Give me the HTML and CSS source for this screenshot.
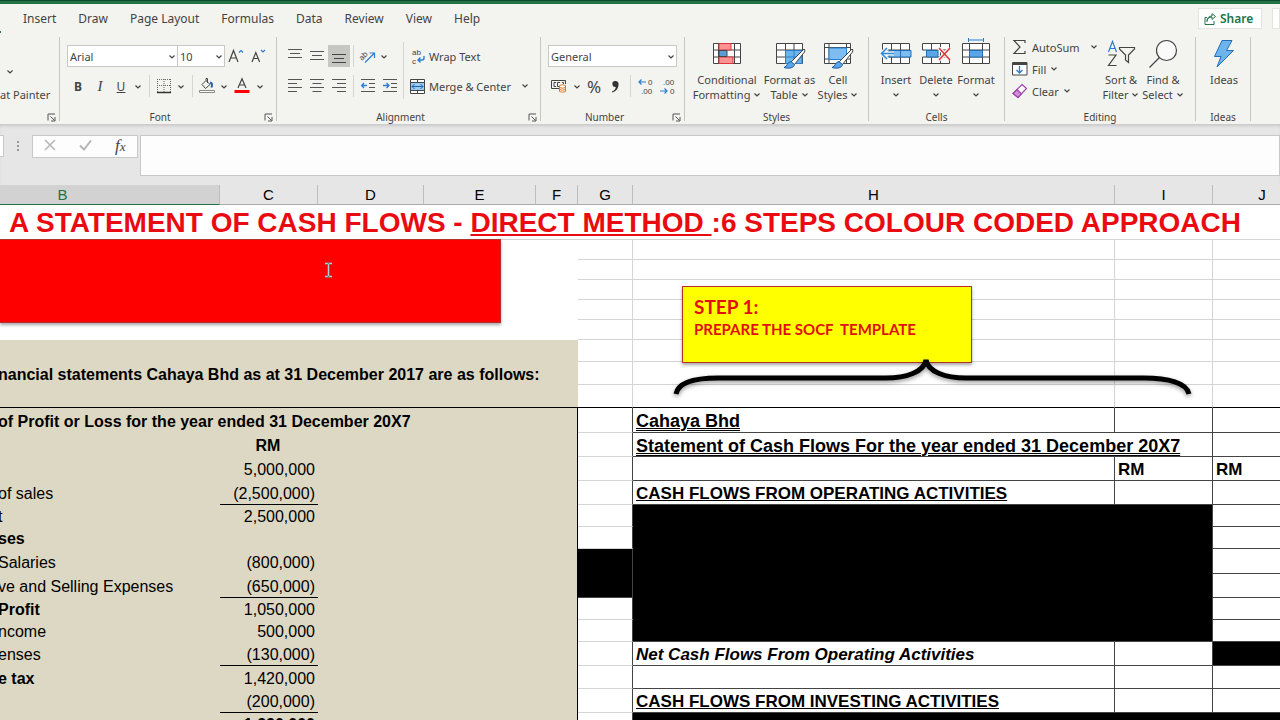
FILE: index.html
```html
<!DOCTYPE html>
<html lang="en">

<head>
    <meta charset="UTF-8">
    <meta name="viewport" content="width=device-width, initial-scale=1.0">
    <title>Statement of Cash Flows</title>
    <link rel="stylesheet" href="styles.css">
</head>

<body>
    <!-- shared icons -->
    <svg class="defs" aria-hidden="true">
        <symbol id="chev" viewBox="0 0 8 8"><path d="M1.5 2.5 4 5 6.5 2.5" fill="none" stroke="#444" stroke-width="1.2" /></symbol>
        <symbol id="launch" viewBox="0 0 9 9"><path d="M1 7.500V1H8M3.500 3.500 7.500 7.500M8 4V8H4" fill="none" stroke="#555" /></symbol>
    </svg>

    <div class="title-strip"></div>

    <!-- tabs -->
    <nav class="tabs">
        <span class="tab-active"></span>
        <a href="#">Insert</a>
        <a href="#">Draw</a>
        <a href="#">Page Layout</a>
        <a href="#">Formulas</a>
        <a href="#">Data</a>
        <a href="#">Review</a>
        <a href="#">View</a>
        <a href="#">Help</a>
        <button class="share">
            <svg width="12" height="12" viewBox="0 0 12 12" fill="none" stroke="#217346"><path d="M3 4.500H1V11.500H10V8M3 8.500C3 5.500 5 4 8 4V6.500L11.500 3.500 8 .7V3C5 3 3 5 3 8.500" /></svg>
            Share
        </button>
        <button class="comments" aria-label="Comments">
            <svg width="12" height="12" viewBox="0 0 12 12" fill="none" stroke="#217346"><path d="M1 1.500H11V8.500H6L3.500 11V8.500H1Z" /></svg>
        </button>
    </nav>

    <!-- ribbon -->
    <div class="ribbon">
        <div class="group clipboard">
            <div class="tools stack">
                <button class="arrow" aria-label="Copy"><svg><use href="#chev" /></svg></button>
                <button class="text-btn">at Painter</button>
            </div>
            <div class="group-name"><span></span><button class="launch" aria-label="Clipboard settings"><svg><use href="#launch" /></svg></button></div>
        </div>

        <div class="group font">
            <div class="tools stack">
                <div class="row">
                    <div class="pick pick-font"><select aria-label="Font"><option>Arial</option></select><svg><use href="#chev" /></svg></div>
                    <div class="pick pick-size"><select aria-label="Font size"><option>10</option></select><svg><use href="#chev" /></svg></div>
                    <button class="tool" aria-label="Increase font size"><svg width="16" height="16" viewBox="0 0 16 16" fill="none" stroke="#444" stroke-width="1.200"><path d="M1 14 5.500 2.500 10 14M2.700 10H8.300" /><path d="M11 4.500 13 2.500 15 4.500" stroke="#2b7cd3" /></svg></button>
                    <button class="tool" aria-label="Decrease font size"><svg width="16" height="16" viewBox="0 0 16 16" fill="none" stroke="#444" stroke-width="1.200"><path d="M2 14 5.800 4.500 9.600 14M3.500 10.500H8" /><path d="M11 2 13 4 15 2" stroke="#2b7cd3" /></svg></button>
                </div>
                <div class="row">
                    <button class="tool bold">B</button>
                    <button class="tool italic">I</button>
                    <button class="tool narrow under">U</button>
                    <button class="arrow" aria-label="Underline options"><svg><use href="#chev" /></svg></button>
                    <span class="sep"></span>
                    <button class="tool narrow" aria-label="Borders"><svg width="16" height="16" viewBox="0 0 16 16" fill="none" stroke="#666"><path d="M1 1.500H15M1 7.500H15M1.500 1V14M8 1V14M14.500 1V14" stroke-dasharray="1 1" /><path d="M1 14.500H15" stroke="#333" stroke-width="1.500" /></svg></button>
                    <button class="arrow" aria-label="Border options"><svg><use href="#chev" /></svg></button>
                    <span class="sep"></span>
                    <button class="tool narrow" aria-label="Fill colour"><svg width="16" height="16" viewBox="0 0 16 16" fill="none" stroke="#444"><path d="M3 6.500 7 2.500 11 6.500 6.500 10.500ZM7 2.500V.5H8.500V5" /><path d="M11 4.500C13 5 13.500 6 12.500 9.500" stroke="#1f5fa8" stroke-width="2" /><path d="M.5 12.500H15.500V14.500H.5Z" fill="#fff" stroke="#888" /></svg></button>
                    <button class="arrow" aria-label="Fill options"><svg><use href="#chev" /></svg></button>
                    <button class="tool" aria-label="Font colour"><svg width="16" height="16" viewBox="0 0 16 16" fill="none" stroke="#444" stroke-width="1.200"><path d="M4 10 8 .8 12 10M5.500 7H10.500" /><path d="M.5 13.500H15.500" stroke="#f00" stroke-width="3" /></svg></button>
                    <button class="arrow" aria-label="Font colour options"><svg><use href="#chev" /></svg></button>
                </div>
            </div>
            <div class="group-name"><span>Font</span><button class="launch" aria-label="Font settings"><svg><use href="#launch" /></svg></button></div>
        </div>

        <div class="group alignment">
            <div class="tools">
                <div class="stack">
                    <div class="row">
                        <button class="tool" aria-label="Top align"><svg width="14" height="16" viewBox="0 0 14 16" stroke="#555"><path d="M0 1.500H14M2 5.500H12M0 9.500H14" /></svg></button>
                        <button class="tool" aria-label="Middle align"><svg width="14" height="16" viewBox="0 0 14 16" stroke="#555"><path d="M0 3.500H14M2 7.500H12M0 11.500H14" /></svg></button>
                        <button class="tool pressed" aria-label="Bottom align"><svg width="14" height="16" viewBox="0 0 14 16" stroke="#444"><path d="M0 6.500H14M2 10.500H12M0 14.500H14" /></svg></button>
                        <span class="sep tight"></span>
                        <button class="tool narrow" aria-label="Orientation"><svg width="17" height="16" viewBox="0 0 17 16"><text class="icon-text" x="0" y="10" transform="rotate(-45 5 8)">ab</text><path d="M6 14.500 15 5.500M10.500 5H15.500V10" fill="none" stroke="#2b7cd3" stroke-width="1.200" /></svg></button>
                        <button class="arrow" aria-label="Orientation options"><svg><use href="#chev" /></svg></button>
                    </div>
                    <div class="row">
                        <button class="tool" aria-label="Align left"><svg width="14" height="14" viewBox="0 0 14 14" stroke="#555"><path d="M0 .5H14M0 4.500H9M0 8.500H14M0 12.500H9" /></svg></button>
                        <button class="tool" aria-label="Center"><svg width="14" height="14" viewBox="0 0 14 14" stroke="#555"><path d="M0 .5H14M2.500 4.500H11.500M0 8.500H14M2.500 12.500H11.500" /></svg></button>
                        <button class="tool" aria-label="Align right"><svg width="14" height="14" viewBox="0 0 14 14" stroke="#555"><path d="M0 .5H14M5 4.500H14M0 8.500H14M5 12.500H14" /></svg></button>
                        <span class="sep tight"></span>
                        <button class="tool" aria-label="Decrease indent"><svg width="14" height="14" viewBox="0 0 14 14" fill="none" stroke="#555"><path d="M0 .5H14M8 4.500H14M8 8.500H14M0 12.500H14" /><path d="M6 6.500H1M3 4 .7 6.500 3 9" stroke="#2b7cd3" stroke-width="1.300" /></svg></button>
                        <button class="tool" aria-label="Increase indent"><svg width="14" height="14" viewBox="0 0 14 14" fill="none" stroke="#555"><path d="M0 .5H14M8 4.500H14M8 8.500H14M0 12.500H14" /><path d="M0 6.500H5M3.500 4 6 6.500 3.500 9" stroke="#2b7cd3" stroke-width="1.300" /></svg></button>
                    </div>
                </div>
                <span class="sep tall"></span>
                <div class="stack">
                    <button class="text-btn"><svg width="15" height="18" viewBox="0 0 15 18"><text class="icon-text" x="2" y="8">ab</text><text class="icon-text" x="2" y="17">c</text><path d="M14 9V11Q14 13 12 13H8M10.500 10.500 8 13 10.500 15.500" fill="none" stroke="#2b7cd3" stroke-width="1.400" /></svg>Wrap Text</button>
                    <button class="text-btn"><svg width="15" height="15" viewBox="0 0 15 15" fill="none"><path d="M.5.5H14.500V14.500H.5ZM.5 3.500H14.500M.5 11.500H14.500M7.500.5V3.500M7.500 11.500V14.500" fill="#fff" stroke="#444" /><path d="M1 4H14V11H1Z" fill="#9dcbf0" /><path d="M2 7.500H13M4.500 5 2 7.500 4.500 10M10.500 5 13 7.500 10.500 10" stroke="#1565b5" /></svg>Merge &amp; Center<svg class="far"><use href="#chev" /></svg></button>
                </div>
            </div>
            <div class="group-name"><span>Alignment</span><button class="launch" aria-label="Alignment settings"><svg><use href="#launch" /></svg></button></div>
        </div>

        <div class="group number">
            <div class="tools stack">
                <div class="row">
                    <div class="pick pick-format"><select aria-label="Number format"><option>General</option></select><svg><use href="#chev" /></svg></div>
                </div>
                <div class="row">
                    <button class="tool" aria-label="Accounting format"><svg width="16" height="14" viewBox="0 0 16 14" fill="none" stroke="#444"><path d="M8 9.500H.5V1.500H14.500V5M5 3.500H3V7.500H5M9 3.500H6.500V7.500H8M12.500 5V3.500H11" /><path d="M8.500 6.500Q11.500 5 14.500 6.500V12.500Q11.500 14 8.500 12.500ZM8.500 8.500Q11.500 10 14.500 8.500M8.500 10.500Q11.500 12 14.500 10.500" fill="#fff" stroke="#e07b1c" /></svg></button>
                    <button class="arrow" aria-label="Accounting options"><svg><use href="#chev" /></svg></button>
                    <button class="tool narrow percent">%</button>
                    <button class="tool" aria-label="Comma style"><svg width="8" height="13" viewBox="0 0 8 13"><path d="M4 1A3 3 0 0 1 7.500 4.500C7.500 8.500 5 11.500 1 12.500V11.500C3.500 10.500 4.500 9 4.800 7A3 3 0 1 1 4 1Z" fill="#333" /></svg></button>
                    <span class="sep"></span>
                    <button class="tool" aria-label="Increase decimal"><svg width="16" height="18" viewBox="0 0 16 18"><text class="icon-text" x="10" y="8">0</text><text class="icon-text" x="3" y="17">.00</text><path d="M8 5H1M3.500 2.500 1 5 3.500 7.500" fill="none" stroke="#2b7cd3" stroke-width="1.200" /></svg></button>
                    <button class="tool" aria-label="Decrease decimal"><svg width="16" height="18" viewBox="0 0 16 18"><text class="icon-text" x="3" y="8">.00</text><text class="icon-text" x="10" y="17">0</text><path d="M0 14H7M4.500 11.500 7 14 4.500 16.500" fill="none" stroke="#2b7cd3" stroke-width="1.200" /></svg></button>
                </div>
            </div>
            <div class="group-name"><span>Number</span><button class="launch" aria-label="Number settings"><svg><use href="#launch" /></svg></button></div>
        </div>

        <div class="group styles">
            <div class="tools">
                <button class="big wide">
                    <svg width="28" height="28" viewBox="0 0 28 28" fill="none" stroke="#444"><path d="M.5 3.500H27.500V23.500H.5ZM.5 10H27.500M.5 17H27.500M5.500 3.500V23.500M21.500 3.500V23.500" fill="#fff" /><path d="M6 3.500H18V10H6ZM6 17H20V23.500H6Z" fill="#ff9290" stroke="#d9363e" /><path d="M6 10.500H14V16.500H6Z" fill="#5b9bd5" /></svg>
                    <span>Conditional</span><span>Formatting <svg><use href="#chev" /></svg></span>
                </button>
                <button class="big mid">
                    <svg width="28" height="28" viewBox="0 0 28 28" fill="none" stroke="#444"><path d="M.5 3.500H26.500V23.500H.5ZM.5 10H26.500M.5 17H26.500M9.500 3.500V23.500M18 3.500V23.500" fill="#fff" /><path d="M9.500 10.500H26V23.500H9.500ZM9.500 17H26M18 10.500V23.500" fill="#6db3ec" stroke="#2b7cd3" /><path d="M28 9 15 22 18 25 28.500 12Q29.500 9.500 28 9Z" fill="#fff" /><path d="M15 21.500C11 22 12 26 8 27.500C13 29 18 28 18.500 24.500Z" fill="#5aa6e6" stroke="#1f5fa8" /></svg>
                    <span>Format as</span><span>Table <svg><use href="#chev" /></svg></span>
                </button>
                <button class="big">
                    <svg width="28" height="28" viewBox="0 0 28 28" fill="none" stroke="#444"><path d="M.5 3.500H26.500V23.500H.5ZM.5 7.500H26.500M.5 19H26.500M5 3.500V23.500M22.500 3.500V23.500" fill="#fff" /><path d="M5 8H22.500V19.500H5Z" fill="#7fbdf0" stroke="#2b7cd3" /><path d="M28 9 15 22 18 25 28.500 12Q29.500 9.500 28 9Z" fill="#fff" /><path d="M15 21.500C11 22 12 26 8 27.500C13 29 18 28 18.500 24.500Z" fill="#5aa6e6" stroke="#1f5fa8" /></svg>
                    <span>Cell</span><span>Styles <svg><use href="#chev" /></svg></span>
                </button>
            </div>
            <div class="group-name"><span>Styles</span></div>
        </div>

        <div class="group cells">
            <div class="tools">
                <button class="big">
                    <svg width="32" height="28" viewBox="0 0 32 28" fill="none" stroke="#444"><path d="M2.500 3.500H29.500V23.500H2.500ZM11.500 3.500V23.500M20.500 3.500V23.500M2.500 10H29.500M2.500 17H29.500" fill="#fff" /><path d="M9 10.500H31V17H9ZM20.500 10.500V17" fill="#7fbdf0" stroke="#1f6fb8" /><path d="M14 13.500H1.500M7 8 1.500 13.500 7 19" stroke="#f3f3ef" stroke-width="4" /><path d="M14 13.500H1.500M7 8 1.500 13.500 7 19" stroke="#2b8be0" stroke-width="1.500" /></svg>
                    <span>Insert</span><span><svg><use href="#chev" /></svg></span>
                </button>
                <button class="big">
                    <svg width="32" height="28" viewBox="0 0 32 28" fill="none" stroke="#444"><path d="M2.500 10V3.500H29.500V9M2.500 17V23.500H29.500V18M11.500 3.500V23.500M20.500 3.500V23.500M2.500 10H29M2.500 17H29" fill="#fff" /><path d="M6.500 10.500H18V17H6.500Z" fill="#5aa6e6" stroke="#1f6fb8" /><path d="M19 8 30 20M30 8 19 20" stroke="#f3f3ef" stroke-width="4" /><path d="M19 8 30 20M30 8 19 20" stroke="#e0353b" stroke-width="1.500" /></svg>
                    <span>Delete</span><span><svg><use href="#chev" /></svg></span>
                </button>
                <button class="big">
                    <svg width="32" height="28" viewBox="0 0 32 28" fill="none" stroke="#444"><path d="M2.500 3.500H29.500V23.500H2.500ZM9.500 3.500V23.500M22.500 3.500V23.500M2.500 10H29.500M2.500 17H29.500" fill="#fff" /><path d="M9.500 10.500H22.500V17H9.500Z" fill="#5aa6e6" stroke="#1f6fb8" /><path d="M8.500 0H23.500M8.500-2V2M23.500-2V2" stroke="#2b7cd3" /></svg>
                    <span>Format</span><span><svg><use href="#chev" /></svg></span>
                </button>
            </div>
            <div class="group-name"><span>Cells</span></div>
        </div>

        <div class="group editing">
            <div class="tools">
                <div class="stack small">
                    <button class="text-btn"><svg width="16" height="16" viewBox="0 0 16 16" fill="none" stroke="#444" stroke-width="1.200"><path d="M13 4V1.500H2L8 8 2 14.500H13V12" /></svg>AutoSum<svg class="far"><use href="#chev" /></svg></button>
                    <button class="text-btn"><svg width="16" height="16" viewBox="0 0 16 16" fill="none" stroke="#444"><path d="M.5 1.500H15V14H.5Z" fill="#fff" /><path d="M.5 3H15" stroke-width="2" /><path d="M7.500 5V12M4.500 9 7.500 12 10.500 9" stroke="#2b7cd3" stroke-width="1.300" /></svg>Fill<svg><use href="#chev" /></svg></button>
                    <button class="text-btn"><svg width="16" height="16" viewBox="0 0 16 16" stroke="#9b3fa8" stroke-width="1.100"><path d="M10 1.500 14.500 5.500 6 14.500 1 10.500Z" fill="#fff" /><path d="M5 6.500 9.500 10.800 6 14.500 1 10.500Z" fill="#cf8ed8" /></svg>Clear<svg><use href="#chev" /></svg></button>
                </div>
                <button class="big">
                    <svg width="28" height="28" viewBox="0 0 28 28" fill="none" stroke="#444" stroke-width="1.200"><path d="M1.500 12 5.500 1.500 9.500 12M3 8.500H8" stroke="#2b7cd3" /><path d="M1.500 15H9L1.500 25.500H9.500M12.500 7.500H27.500V9L21.500 15V22.500L18.500 20V15L12.500 9Z" /></svg>
                    <span>Sort &amp;</span><span>Filter <svg><use href="#chev" /></svg></span>
                </button>
                <button class="big">
                    <svg width="28" height="28" viewBox="0 0 28 28" fill="none" stroke="#444" stroke-width="1.200"><circle cx="17.500" cy="10.500" r="10" fill="#fafafa" /><path d="M10.500 17.500.5 27.500" /></svg>
                    <span>Find &amp;</span><span>Select <svg><use href="#chev" /></svg></span>
                </button>
            </div>
            <div class="group-name"><span>Editing</span></div>
        </div>

        <div class="group ideas">
            <div class="tools">
                <button class="big">
                    <svg width="22" height="28" viewBox="0 0 22 28"><path d="M9 .5H19L13.500 10.500H20.500L4 27 8 16.500H1.500Z" fill="#6db3ec" stroke="#1f6fb8" /></svg>
                    <span>Ideas</span>
                </button>
            </div>
            <div class="group-name"><span>Ideas</span></div>
        </div>
    </div>

    <!-- formula bar -->
    <div class="formula-bar">
        <span class="name-box"></span>
        <svg class="grip" width="3" height="11" viewBox="0 0 3 11"><path d="M0 0H2V2H0ZM0 4H2V6H0ZM0 8H2V10H0Z" fill="#999" /></svg>
        <div class="fx-box">
            <button aria-label="Cancel"><svg width="12" height="12" viewBox="0 0 12 12" stroke="#b5b5b5" stroke-width="1.500"><path d="M1 1 11 11M11 1 1 11" /></svg></button>
            <button aria-label="Enter"><svg width="13" height="12" viewBox="0 0 13 12" fill="none" stroke="#b5b5b5" stroke-width="2"><path d="M1 6.500 5 10.500 12 1.500" /></svg></button>
            <button class="fx" aria-label="Insert function">f<small>x</small></button>
        </div>
        <textarea class="formula" aria-label="Formula"></textarea>
    </div>

    <!-- worksheet -->
    <div class="sheet">
        <table>
            <colgroup>
                <col class="col-b"><col class="col-c"><col class="col-d"><col class="col-e"><col class="col-f"><col class="col-g"><col class="col-h"><col class="col-i"><col class="col-j">
            </colgroup>
            <thead>
                <tr>
                    <th class="selected">B</th><th>C</th><th>D</th><th>E</th><th>F</th><th>G</th><th>H</th><th>I</th><th>J</th>
                </tr>
            </thead>
            <tbody class="plain">
                <tr class="r35"><td colspan="9" class="heading">A STATEMENT OF CASH FLOWS - <u>DIRECT METHOD </u>:6 STEPS COLOUR CODED APPROACH</td></tr>
                <tr class="r20"><td colspan="5" rowspan="5" class="blank"></td><td></td><td></td><td></td><td></td></tr>
                <tr class="r20"><td></td><td></td><td></td><td></td></tr>
                <tr class="r20"><td></td><td></td><td></td><td></td></tr>
                <tr class="r20"><td></td><td></td><td></td><td></td></tr>
                <tr class="r20"><td></td><td></td><td></td><td></td></tr>
                <tr class="r22"><td colspan="5" class="note"></td><td></td><td></td><td></td><td></td></tr>
                <tr class="r23"><td colspan="5" class="note strong">nancial statements Cahaya Bhd as at 31 December 2017 are as follows:</td><td></td><td></td><td></td><td></td></tr>
                <tr class="r23 last"><td colspan="5" class="note"></td><td></td><td></td><td></td><td></td></tr>
            </tbody>
            <tbody class="template">
                <tr class="r25"><td colspan="5" class="note edge strong">of Profit or Loss for the year ended 31 December 20X7</td><td class="g"></td><td class="name">Cahaya Bhd</td><td></td><td></td></tr>
                <tr class="r24"><td class="note"></td><td class="note rm">RM</td><td colspan="3" class="note edge"></td><td class="g"></td><td colspan="2" class="name">Statement of Cash Flows For the year ended 31 December 20X7</td><td></td></tr>
                <tr class="r24"><td class="note"></td><td class="note num">5,000,000</td><td colspan="3" class="note edge"></td><td class="g"></td><td></td><td class="strong">RM</td><td class="strong">RM</td></tr>
                <tr class="r24"><td class="note">of sales</td><td class="note num total">(2,500,000)</td><td colspan="3" class="note edge"></td><td class="g"></td><td class="section">CASH FLOWS FROM OPERATING ACTIVITIES</td><td></td><td></td></tr>
                <tr class="r22"><td class="note">t</td><td class="note num">2,500,000</td><td colspan="3" class="note edge"></td><td class="g"></td><td colspan="2" rowspan="6" class="dark"></td><td></td></tr>
                <tr class="r22"><td class="note strong">ses</td><td class="note"></td><td colspan="3" class="note edge"></td><td class="g"></td><td></td></tr>
                <tr class="r25"><td class="note">Salaries</td><td class="note num">(800,000)</td><td colspan="3" class="note edge"></td><td rowspan="2" class="dark"></td><td></td></tr>
                <tr class="r24"><td class="note">ve and Selling Expenses</td><td class="note num total">(650,000)</td><td colspan="3" class="note edge"></td><td></td></tr>
                <tr class="r22"><td class="note strong">Profit</td><td class="note num">1,050,000</td><td colspan="3" class="note edge"></td><td class="g"></td><td></td></tr>
                <tr class="r22"><td class="note">ncome</td><td class="note num">500,000</td><td colspan="3" class="note edge"></td><td class="g"></td><td></td></tr>
                <tr class="r24"><td class="note">enses</td><td class="note num total">(130,000)</td><td colspan="3" class="note edge"></td><td class="g"></td><td class="net">Net Cash Flows From Operating Activities</td><td></td><td class="dark"></td></tr>
                <tr class="r23"><td class="note strong">e tax</td><td class="note num">1,420,000</td><td colspan="3" class="note edge"></td><td class="g"></td><td></td><td></td><td></td></tr>
                <tr class="r24"><td class="note"></td><td class="note num total">(200,000)</td><td colspan="3" class="note edge"></td><td class="g"></td><td class="section">CASH FLOWS FROM INVESTING ACTIVITIES</td><td></td><td></td></tr>
                <tr class="r22"><td class="note"></td><td class="note num strong">1,220,000</td><td colspan="3" class="note edge"></td><td class="g"></td><td colspan="3" class="dark"></td></tr>
            </tbody>
        </table>

        <!-- shapes floating over the cells -->
        <div class="red-box"></div>
        <svg class="cursor" width="9" height="16" viewBox="0 0 9 16" fill="none"><path d="M1 1.500H3.500L4.500 2.500 5.500 1.500H8M4.500 2.500V13.500M1 14.500H3.500L4.500 13.500 5.500 14.500H8" stroke="#777" stroke-width="2.500" /><path d="M1 1.500H3.500L4.500 2.500 5.500 1.500H8M4.500 2.500V13.500M1 14.500H3.500L4.500 13.500 5.500 14.500H8" stroke="#b9cfcf" /></svg>
        <div class="callout">
            <div class="step">STEP 1:</div>
            <div class="what">PREPARE THE SOCF &nbsp;TEMPLATE</div>
        </div>
        <svg class="brace" width="524" height="44" viewBox="0 0 524 44"><path d="M6 37C8 26 24 21 48 21H216C236 21 254 15 256 3C258 15 276 21 296 21H474C498 21 517 26 519 37" fill="none" stroke="#000" stroke-width="5" /></svg>
    </div>
</body>

</html>
```
FILE: styles.css
```css
* {
    box-sizing: border-box;
    margin: 0;
    padding: 0;
}

body {
    height: 100vh;
    display: flex;
    flex-direction: column;
    overflow: hidden;
    background: #fff;
    color: #444;
    font-family: "Noto Sans", sans-serif;
    font-size: 12px;
}

button,
select,
textarea {
    border: none;
    background: none;
    color: inherit;
    font: inherit;
}

.defs {
    display: none;
}

.title-strip {
    flex: none;
    height: 4px;
    background: #217346;
    border-top: 1px solid #0e4a2a;
}

/* tabs */
.tabs {
    flex: none;
    display: flex;
    align-items: center;
    gap: 22px;
    height: 33px;
    padding-bottom: 4px;
    background: #f3f3ef;
}

.tabs a {
    color: #444;
    text-decoration: none;
    white-space: nowrap;
}

.tab-active {
    align-self: flex-end;
    width: 1px;
    height: 2px;
    background: #217346;
}

.share,
.comments {
    height: 21px;
    background: #fff;
    border: 1px solid #e3e3e0;
}

.share {
    display: flex;
    align-items: center;
    gap: 4px;
    width: 64px;
    margin-left: auto;
    padding-left: 5px;
    color: #217346;
    font-weight: 600;
}

.comments {
    width: 8px;
    margin-left: -12px;
    padding-left: 6px;
    overflow: hidden;
}

/* ribbon */
.ribbon {
    flex: none;
    display: flex;
    height: 87px;
    padding-bottom: 3px;
    background: #f3f3ef;
    font-size: 11px;
}

.group {
    flex: none;
    display: flex;
    flex-direction: column;
    border-right: 1px solid #c6c6c3;
}

.group svg {
    overflow: visible;
}

.clipboard {
    width: 60px;
}

.font {
    width: 217px;
}

.alignment {
    width: 264px;
}

.number {
    width: 144px;
}

.styles {
    width: 184px;
}

.cells {
    width: 136px;
}

.editing {
    width: 191px;
}

.ideas {
    width: 55px;
}

.tools {
    flex: 1;
    display: flex;
    align-items: flex-start;
    padding-left: 7px;
}

.stack {
    display: flex;
    flex-direction: column;
    align-items: flex-start;
    gap: 8px;
    padding-top: 8px;
}

.clipboard .stack {
    gap: 1px;
    padding-top: 23px;
    padding-left: 0;
}

.clipboard .arrow {
    width: 20px;
}

.editing .small {
    gap: 2px;
    width: 88px;
    padding-top: 0;
}

.row {
    display: flex;
    align-items: center;
    height: 22px;
}

.tool {
    display: flex;
    align-items: center;
    justify-content: center;
    width: 22px;
    height: 22px;
}

.narrow {
    width: 20px;
}

.pressed {
    background: #c6c6c3;
}

.bold {
    font-size: 12px;
    font-weight: 700;
}

.italic {
    font-family: "Liberation Serif", serif;
    font-size: 15px;
    font-style: italic;
}

.under {
    font-size: 12px;
    text-decoration: underline;
}

.percent {
    font-size: 17px;
}

.arrow {
    width: 14px;
    height: 22px;
}

.group svg:not([width]) {
    width: 8px;
    height: 8px;
}

.sep {
    width: 1px;
    height: 22px;
    margin: 0 4px;
    background: #d5d5d2;
}

.tight {
    margin: 0 3px;
}

.tall {
    height: 57px;
    margin: 5px 6px 0 2px;
}

.pick {
    position: relative;
    height: 22px;
    background: #fff;
    border: 1px solid #c8c8c5;
}

.pick-font {
    width: 111px;
}

.pick-size {
    width: 48px;
    margin-left: -1px;
}

.pick-format {
    width: 129px;
}

.pick select {
    appearance: none;
    width: 100%;
    height: 20px;
    padding-left: 2px;
    outline: none;
}

.pick svg {
    position: absolute;
    top: 7px;
    right: 1px;
    pointer-events: none;
}

.text-btn {
    display: flex;
    align-items: center;
    gap: 4px;
    height: 22px;
    white-space: nowrap;
}

.small .text-btn {
    height: 20px;
}

.stack .far {
    margin-left: 6px;
}

.icon-text {
    font-family: "Liberation Sans", sans-serif;
    font-size: 8px;
    fill: #444;
}

.big {
    display: flex;
    flex-direction: column;
    align-items: center;
    width: 42px;
    padding-top: 3px;
    line-height: 15px;
    white-space: nowrap;
}

.big > svg {
    margin-bottom: 4px;
}

.wide {
    width: 70px;
}

.mid {
    width: 55px;
}

.cells .big {
    width: 40px;
}

.group-name {
    display: flex;
    align-items: center;
    height: 8px;
    font-size: 10px;
    line-height: 8px;
}

.group-name span {
    flex: 1;
    text-align: center;
}

.launch {
    width: 16px;
    height: 10px;
    line-height: 0;
}

.group .launch svg {
    width: 9px;
    height: 9px;
}

/* formula bar */
.formula-bar {
    flex: none;
    display: flex;
    align-items: flex-start;
    height: 61px;
    padding-top: 11px;
    background: #e6e6e6;
    box-shadow: inset 0 3px 3px -1px #c9c9c9;
}

.name-box {
    width: 4px;
    height: 22px;
    background: #fff;
    border: 1px solid #c8c8c8;
    border-left: none;
}

.grip {
    margin: 6px 12px 0 13px;
}

.fx-box {
    display: flex;
    align-items: center;
    justify-content: space-around;
    width: 106px;
    height: 23px;
    margin-right: 2px;
    background: #fdfdfd;
    border: 1px solid #c8c8c8;
}

.fx {
    color: #444;
    font-family: "Liberation Serif", serif;
    font-size: 17px;
    font-style: italic;
    line-height: 18px;
}

.fx small {
    font-size: 13px;
}

.formula {
    flex: 1;
    height: 41px;
    background: #fdfdfd;
    border: 1px solid #c8c8c8;
    resize: none;
}

/* worksheet */
.sheet {
    flex: 1;
    position: relative;
    overflow: hidden;
    color: #000;
    font-family: "Liberation Sans", Arial, sans-serif;
    font-size: 17px;
    line-height: 18px;
}

/* column J runs past the window edge */
table {
    width: calc(100% + 32px);
    table-layout: fixed;
    border-collapse: separate;
    border-spacing: 0;
}

.col-b {
    width: 220px;
}

.col-c {
    width: 98px;
}

.col-d {
    width: 106px;
}

.col-e {
    width: 112px;
}

.col-f {
    width: 42px;
}

.col-g {
    width: 55px;
}

.col-i {
    width: 98px;
}

.col-j {
    width: 99px;
}

th {
    height: 20px;
    padding-top: 1px;
    background: #e6e6e6;
    border-right: 1px solid #bdbdbd;
    border-bottom: 1px solid #ababab;
    font-size: 15px;
    font-weight: 400;
}

.selected {
    padding-right: 94px;
    background: #d2d2d2;
    border-bottom-color: #217346;
    color: #217346;
}

td {
    padding: 2px 3px 0;
    border-right: 1px solid #d4d4d4;
    border-bottom: 1px solid #d4d4d4;
    vertical-align: middle;
    white-space: nowrap;
}

.r20 {
    height: 20px;
}

.r22 {
    height: 22px;
}

.r23 {
    height: 23px;
}

.r24 {
    height: 24px;
}

.r25 {
    height: 25px;
}

.r35 {
    height: 35px;
}

.heading {
    padding-left: 9px;
    color: #e90b10;
    font-size: 28px;
    font-weight: 700;
    line-height: 32px;
}

.blank {
    border: none;
}

.plain .last td {
    border-bottom: 1px solid #000;
}

.template td {
    border-color: #444;
}

.template .g {
    border-bottom-color: #d4d4d4;
}

.sheet .note {
    padding: 2px 0 0;
    background: #ddd8c3;
    border: none;
    font-size: 16px;
    text-indent: -2px;
}

.sheet .edge {
    border-right: 1px solid #000;
}

.sheet .num {
    padding-right: 3px;
    text-align: right;
}

.sheet .rm {
    font-weight: 700;
    text-align: center;
}

.sheet .total {
    border-bottom: 1px solid #000;
}

.strong,
.name,
.section,
.net {
    font-weight: 700;
}

.name {
    font-size: 18px;
    text-decoration: underline double 1px;
}

.section {
    text-decoration: underline;
}

.net {
    font-style: italic;
}

.dark {
    background: #000;
}

/* floating shapes */
.red-box {
    position: absolute;
    top: 54px;
    left: 0;
    width: 501px;
    height: 84px;
    background: #f00;
    border: 1px solid #b3302c;
    border-left: none;
    box-shadow: 0 2px 3px rgba(0, 0, 0, 0.35);
}

.cursor {
    position: absolute;
    top: 77px;
    left: 324px;
}

.callout {
    position: absolute;
    top: 101px;
    left: 682px;
    width: 290px;
    height: 77px;
    padding: 8px 11px;
    background: #ff0;
    border: 1px solid #b3302c;
    box-shadow: 0 2px 3px rgba(0, 0, 0, 0.35);
    color: #e01010;
    font-family: Lato, sans-serif;
    font-size: 15px;
    font-weight: 700;
    line-height: 20px;
}

.step {
    font-size: 19px;
    line-height: 24px;
}

.brace {
    position: absolute;
    top: 172px;
    left: 670px;
    filter: drop-shadow(0 2px 2px rgba(0, 0, 0, 0.4));
}
```
